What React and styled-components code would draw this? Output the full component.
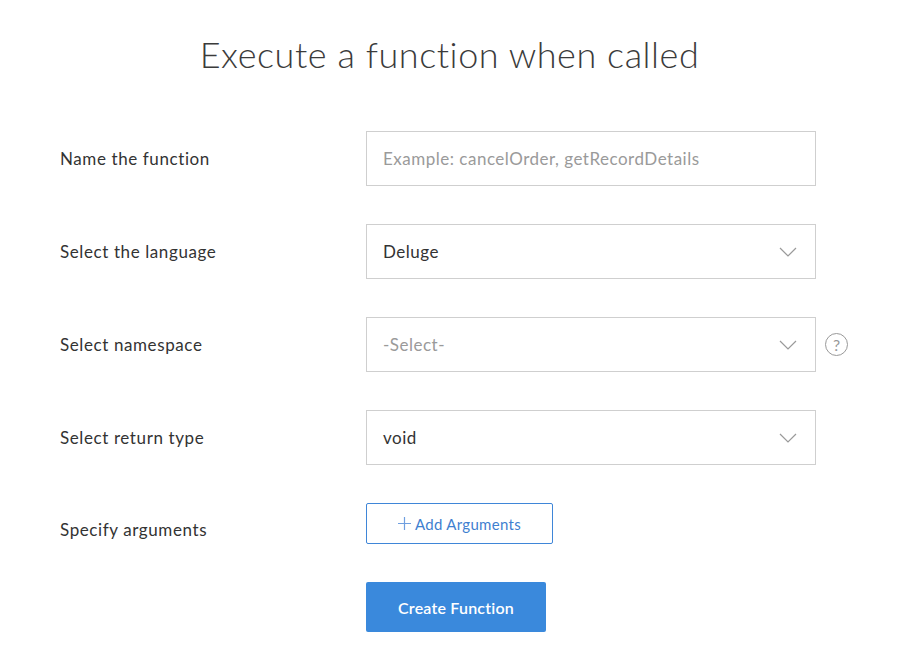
import React from 'react';
import styled, { createGlobalStyle } from 'styled-components';

const Global = createGlobalStyle`
  body { margin: 0; background: #fff; font-family: Lato, "Open Sans", sans-serif; }
`;

const Page = styled.div`
  width: 899px;
  padding: 32px 0 0 60px;
  box-sizing: border-box;
`;

const Title = styled.h1`
  margin: 0 0 55px;
  padding-right: 60px;
  text-align: center;
  font-weight: 300;
  font-size: 36px;
  line-height: 44px;
  color: #3b3b3b;
  letter-spacing: 0.55px;
`;

const Form = styled.div`
  display: grid;
  grid-template-columns: 306px 450px auto;
  row-gap: 38px;
  align-items: center;
`;

const Label = styled.div`
  font-size: 17px;
  letter-spacing: 0.6px;
  color: #333;
  padding-top: ${(p) => p.$offset || 0}px;
`;

const Field = styled.div`
  height: 55px;
  box-sizing: border-box;
  border: 1px solid #cfcfcf;
  display: flex;
  align-items: center;
  justify-content: space-between;
  padding: 0 18px 0 16px;
  font-size: 17px;
  letter-spacing: 0.5px;
  color: ${(p) => (p.$placeholder ? '#9a9a9a' : '#333')};
`;

const Help = styled.div`
  margin-left: 9px;
  width: 21px;
  height: 21px;
  border: 1.5px solid #999;
  border-radius: 50%;
  display: flex;
  align-items: center;
  justify-content: center;
  font-size: 16px;
  color: #999;
`;

const OutlineButton = styled.button`
  width: 187px;
  height: 41px;
  border: 1px solid #3f86d8;
  border-radius: 2px;
  background: #fff;
  color: #3f7fd0;
  font-family: inherit;
  font-size: 15px;
  letter-spacing: 0.3px;
  display: flex;
  align-items: center;
  justify-content: center;
  gap: 4px;
`;

const Primary = styled.button`
  width: 180px;
  height: 50px;
  border: none;
  border-radius: 2px;
  background: #3a89dc;
  color: #fff;
  font-family: inherit;
  font-size: 16px;
  font-weight: 600;
  letter-spacing: 0.2px;
`;

const Chevron = () => (
  <svg width="18" height="10" viewBox="0 0 18 10">
    <path d="M1 1l8 8 8-8" fill="none" stroke="#9a9a9a" strokeWidth="1.2" />
  </svg>
);

const Plus = () => (
  <svg width="13" height="13" viewBox="0 0 13 13">
    <path d="M6.5 0v13M0 6.5h13" stroke="#6f9fe0" strokeWidth="1.2" />
  </svg>
);

export default function App() {
  return (
    <Page>
      <Global />
      <Title>Execute a function when called</Title>
      <Form>
        <Label>Name the function</Label>
        <Field $placeholder>Example: cancelOrder, getRecordDetails</Field>
        <span />
        <Label>Select the language</Label>
        <Field>Deluge<Chevron /></Field>
        <span />
        <Label>Select namespace</Label>
        <Field $placeholder>-Select-<Chevron /></Field>
        <Help>?</Help>
        <Label>Select return type</Label>
        <Field>void<Chevron /></Field>
        <span />
        <Label $offset={12}>Specify arguments</Label>
        <div><OutlineButton><Plus />Add Arguments</OutlineButton></div>
        <span />
        <span />
        <div><Primary>Create Function</Primary></div>
        <span />
      </Form>
    </Page>
  );
}
